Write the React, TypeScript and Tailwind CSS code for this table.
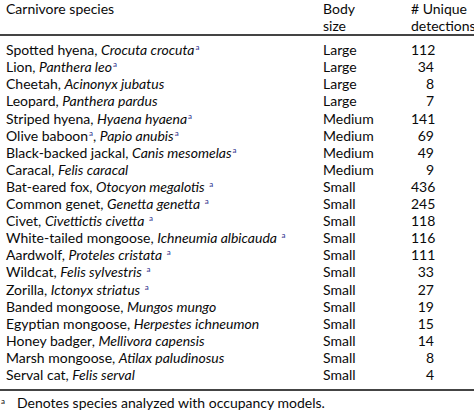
const rows: [string, string, string, string, number][] = [
  // [common, latin, sup style, size, detections]
  ["Spotted hyena", "Crocuta crocuta", "tight", "Large", 112],
  ["Lion", "Panthera leo", "tight", "Large", 34],
  ["Cheetah", "Acinonyx jubatus", "", "Large", 8],
  ["Leopard", "Panthera pardus", "", "Large", 7],
  ["Striped hyena", "Hyaena hyaena", "tight", "Medium", 141],
  ["Olive baboon", "Papio anubis", "both", "Medium", 69],
  ["Black-backed jackal", "Canis mesomelas", "tight", "Medium", 49],
  ["Caracal", "Felis caracal", "", "Medium", 9],
  ["Bat-eared fox", "Otocyon megalotis", "space", "Small", 436],
  ["Common genet", "Genetta genetta", "space", "Small", 245],
  ["Civet", "Civettictis civetta", "space", "Small", 118],
  ["White-tailed mongoose", "Ichneumia albicauda", "space", "Small", 116],
  ["Aardwolf", "Proteles cristata", "space", "Small", 111],
  ["Wildcat", "Felis sylvestris", "space", "Small", 33],
  ["Zorilla", "Ictonyx striatus", "space", "Small", 27],
  ["Banded mongoose", "Mungos mungo", "", "Small", 19],
  ["Egyptian mongoose", "Herpestes ichneumon", "", "Small", 15],
  ["Honey badger", "Mellivora capensis", "", "Small", 14],
  ["Marsh mongoose", "Atilax paludinosus", "", "Small", 8],
  ["Serval cat", "Felis serval", "", "Small", 4],
];

function Sup() {
  return <span className="relative -top-[5px] ml-[1px] text-[8px] leading-none text-[#2b2d8c]">a</span>;
}

export default function App() {
  return (
    <div
      className="w-[474px] h-[410px] overflow-hidden bg-white text-[14px] leading-[17.1px] text-[#0a0a0a]"
      style={{ fontFamily: "Lato, sans-serif" }}
    >
      <div className="grid grid-cols-[323px_88px_63px]">
        <div className="pl-[6px]">Carnivore species</div>
        <div>
          Body
          <br />
          size
        </div>
        <div className="whitespace-nowrap">
          # Unique
          <br />
          detections
        </div>
      </div>
      <div className="h-[2px] bg-[#444]" />
      <div className="pt-[5px] pb-[6px]">
        {rows.map(([common, latin, sup, size, n]) => (
          <div key={common} className="grid grid-cols-[323px_88px_63px]">
            <div className="pl-[6px] whitespace-nowrap">
              {common}
              {sup === "both" && <Sup />}, <i>{latin}</i>
              {sup === "space" && " "}
              {sup !== "" && <Sup />}
            </div>
            <div>{size}</div>
            <div className="w-[23px] text-right">{n}</div>
          </div>
        ))}
      </div>
      <div className="h-[2px] bg-[#444]" />
      <div className="flex pt-[3px] pl-[1px]">
        <span className="relative -top-[5px] w-[16px] shrink-0 text-[8px] leading-none pt-[8px]">a</span>
        <span>Denotes species analyzed with occupancy models.</span>
      </div>
    </div>
  );
}
